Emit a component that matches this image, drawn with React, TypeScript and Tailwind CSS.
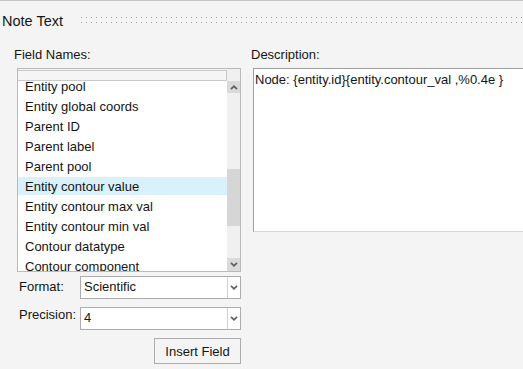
import React from "react";

const items = [
  "Entity pool",
  "Entity global coords",
  "Parent ID",
  "Parent label",
  "Parent pool",
  "Entity contour value",
  "Entity contour max val",
  "Entity contour min val",
  "Contour datatype",
  "Contour component",
];

function ChevronDown() {
  return (
    <svg width="8" height="5" viewBox="0 0 8 5">
      <polyline points="1,0.8 4,3.8 7,0.8" fill="none" stroke="#5e5e5e" strokeWidth="1.7" />
    </svg>
  );
}
function ChevronUp() {
  return (
    <svg width="8" height="5" viewBox="0 0 8 5">
      <polyline points="1,4.2 4,1.2 7,4.2" fill="none" stroke="#5e5e5e" strokeWidth="1.7" />
    </svg>
  );
}

function Select({ value }: { value: string }) {
  return (
    <div className="flex w-[161px] h-[23px] border border-[#adadad] bg-white">
      <div className="flex-1 pl-[3px] pt-[2px] leading-[15px] text-[13px] text-[#141414]">{value}</div>
      <div className="w-[13px] border-l border-[#cfcfcf] flex items-center justify-center">
        <ChevronDown />
      </div>
    </div>
  );
}

export default function App() {
  return (
    <div
      className="w-[523px] h-[369px] overflow-hidden bg-[#f4f4f4] border-t border-[#c4c4c4] flex flex-col text-[#141414]"
      style={{ fontFamily: '"Liberation Sans", Arial, sans-serif' }}
    >
      {/* header */}
      <div className="pt-[12px] flex items-start h-[27px]">
        <span className="pl-[2px] w-[81px] text-[14.5px] leading-[16px]">Note Text</span>
        <svg className="flex-1 mt-[4px]" height="7">
          <defs>
            <pattern id="dots" width="5" height="5" patternUnits="userSpaceOnUse">
              <rect x="0" y="0" width="1" height="1" fill="#a3a3a3" />
            </pattern>
          </defs>
          <rect x="0" y="0" width="100%" height="6" fill="url(#dots)" />
        </svg>
      </div>

      <div className="mt-[19px] flex text-[13px]">
        {/* left column */}
        <div className="w-[241px] pl-[14px] flex flex-col">
          <div className="leading-[15px]">Field Names:</div>
          <div className="mt-[6px] ml-[3px] w-[224px] h-[204px] border border-[#bababa] flex">
            <div className="w-[209px] flex flex-col">
              <div className="mt-[1px] h-[11px] border-y border-r border-[#c9c9c9] bg-[#f5f5f5]" />
              <div className="h-[190px] bg-white overflow-hidden">
                <div className="-mt-[5px]">
                  {items.map((it, i) => (
                    <div
                      key={it}
                      className={
                        "h-[20px] pl-[7px] leading-[20px] whitespace-nowrap border-y " +
                        (i === 5 ? "border-white bg-[#d9f1fb]" : "border-transparent")
                      }
                    >
                      {it}
                    </div>
                  ))}
                </div>
              </div>
            </div>
            <div className="w-[13px] flex flex-col bg-[#f0f0f0]">
              <div className="h-[12px]" />
              <div className="h-[12px] bg-[#dadada] flex items-center justify-center">
                <ChevronUp />
              </div>
              <div className="h-[76px]" />
              <div className="h-[57px] bg-[#d6d6d6]" />
              <div className="h-[32px]" />
              <div className="h-[13px] bg-[#dadada] flex items-center justify-center">
                <ChevronDown />
              </div>
            </div>
          </div>

          <div className="mt-[4px] flex pl-[5px]">
            <div className="w-[61px] pt-[3px] leading-[15px]">Format:</div>
            <Select value="Scientific" />
          </div>
          <div className="mt-[8px] flex pl-[5px]">
            <div className="w-[61px] pt-0 leading-[15px]">Precision:</div>
            <Select value="4" />
          </div>
          <div className="mt-[8px] self-end w-[87px] h-[26px] border border-[#acacac] bg-[#f4f4f4] flex items-center justify-center leading-[15px]">
            Insert Field
          </div>
        </div>

        {/* right column */}
        <div className="pl-[10px] flex flex-col">
          <div className="leading-[15px]">Description:</div>
          <div className="mt-[6px] ml-[2px] w-[290px] h-[164px] border-l border-t border-b border-l-[#a0a0a0] border-t-[#a0a0a0] border-b-[#d8d8d8] bg-white pl-[1px] pt-[3px] leading-[15px] whitespace-nowrap">
            Node: {"{entity.id}{entity.contour_val ,%0.4e }"}
          </div>
        </div>
      </div>
    </div>
  );
}
